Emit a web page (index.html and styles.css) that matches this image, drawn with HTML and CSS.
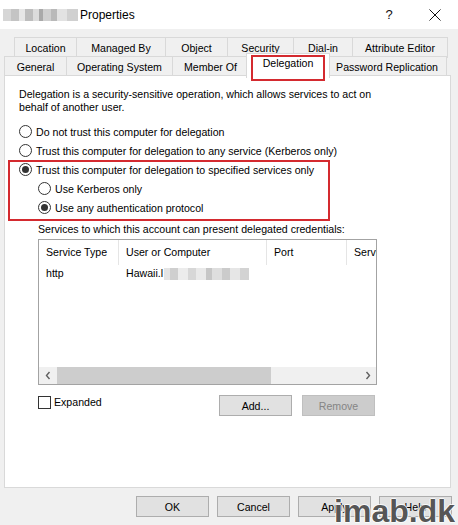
FILE: index.html
```html
<!DOCTYPE html>
<html lang="en">
<head>
<meta charset="utf-8">
<title>Properties</title>
<link rel="stylesheet" href="styles.css">
</head>
<body>
<div class="dialog">
  <header class="titlebar">
    <span class="obj-name"></span>
    <span class="title">Properties</span>
    <span class="caption">
      <span class="cap-btn help">?</span>
      <span class="cap-btn close">
        <svg width="12" height="12" viewBox="0 0 12 12"><path d="M0.5 0.5 L11.5 11.5 M11.5 0.5 L0.5 11.5" stroke="#111" stroke-width="1" fill="none"/></svg>
      </span>
    </span>
  </header>

  <nav class="tabstrip">
    <div class="tabrow row1">
      <div class="tab">Location</div>
      <div class="tab">Managed By</div>
      <div class="tab">Object</div>
      <div class="tab">Security</div>
      <div class="tab">Dial-in</div>
      <div class="tab last">Attribute Editor</div>
    </div>
    <div class="tabrow row2">
      <div class="tab">General</div>
      <div class="tab">Operating System</div>
      <div class="tab">Member Of</div>
      <div class="tab active">Delegation</div>
      <div class="tab last">Password Replication</div>
    </div>
  </nav>

  <section class="panel">
    <p class="desc">Delegation is a security-sensitive operation, which allows services to act on<br>behalf of another user.</p>

    <div class="options">
      <label class="opt"><span class="radio"></span>Do not trust this computer for delegation</label>
      <label class="opt"><span class="radio"></span>Trust this computer for delegation to any service (Kerberos only)</label>
      <label class="opt"><span class="radio on"></span>Trust this computer for delegation to specified services only</label>
      <label class="opt sub"><span class="radio"></span>Use Kerberos only</label>
      <label class="opt sub"><span class="radio on"></span>Use any authentication protocol</label>
    </div>
    <div class="highlight options-mark"></div>

    <p class="svc-label">Services to which this account can present delegated credentials:</p>

    <div class="listview">
      <div class="lv-head">
        <span>Service Type</span>
        <span>User or Computer</span>
        <span>Port</span>
        <span>Service Name</span>
      </div>
      <div class="lv-body">
        <div class="lv-row">
          <span>http</span>
          <span>Hawaii.l<i class="masked"></i></span>
          <span></span>
          <span></span>
        </div>
      </div>
      <div class="hscroll">
        <span class="arrow">
          <svg width="6" height="9" viewBox="0 0 6 9"><path d="M4.5 1 L1.5 4.5 L4.5 8" stroke="#606060" stroke-width="1.4" fill="none"/></svg>
        </span>
        <span class="track"><span class="thumb"></span></span>
        <span class="arrow">
          <svg width="6" height="9" viewBox="0 0 6 9"><path d="M1.5 1 L4.5 4.5 L1.5 8" stroke="#606060" stroke-width="1.4" fill="none"/></svg>
        </span>
      </div>
    </div>

    <div class="list-actions">
      <label class="check"><span class="box"></span>Expanded</label>
      <button class="btn add">Add...</button>
      <button class="btn remove" disabled>Remove</button>
    </div>
  </section>

  <footer class="buttons">
    <button class="btn">OK</button>
    <button class="btn">Cancel</button>
    <button class="btn">Apply</button>
    <button class="btn">Help</button>
  </footer>

  <div class="watermark">imab.dk</div>
</div>
</body>
</html>
```

FILE: styles.css
```css
* { box-sizing: border-box; }

html, body {
  margin: 0;
  padding: 0;
}

body {
  width: 458px;
  height: 525px;
  overflow: hidden;
  background: #f0f0f0;
  font-family: "Liberation Sans", Arial, sans-serif;
  font-size: 10.6px;
  color: #000;
}

.dialog {
  position: relative;
  width: 458px;
  height: 525px;
}

/* ---------- title bar ---------- */
.titlebar {
  height: 29px;
  background: #fff;
  display: flex;
  align-items: center;
  padding-left: 3px;
}

.obj-name {
  width: 75px;
  height: 12px;
  background:
    linear-gradient(90deg,
      #d6d6d6 0 8px, #c4c4c4 8px 16px, #e6e6e6 16px 22px,
      #bdbdbd 22px 30px, #dcdcdc 30px 36px, #a9a9a9 36px 40px,
      #cfcfcf 40px 48px, #b9b9b9 48px 54px, #e2e2e2 54px 64px,
      #d0d0d0 64px 75px);
}

.title {
  margin-left: 2px;
  font-size: 12px;
}

.caption {
  margin-left: auto;
  display: flex;
  height: 29px;
}

.cap-btn {
  width: 46px;
  height: 29px;
  display: flex;
  align-items: center;
  justify-content: center;
}

.help {
  font-size: 13px;
  color: #111;
}

/* ---------- tabs ---------- */
.tabstrip {
  margin-top: 8px;
}

.tabrow {
  display: grid;
  height: 19px;
}

.row1 {
  margin-left: 14px;
  grid-template-columns: 62px 89px 62px 66px 59px 96px;
}

.row2 {
  margin-left: 4px;
  grid-template-columns: 62px 106px 76px 80px 119px;
}

.tab {
  border-top: 1px solid #d9d9d9;
  border-left: 1px solid #d9d9d9;
  background: #f0f0f0;
  text-align: center;
  line-height: 19px;
  padding-top: 1px;
  white-space: nowrap;
}

.tab.last {
  border-right: 1px solid #d9d9d9;
}

.tab.active {
  position: relative;
  z-index: 1;
  margin: -3px -2px -1px -2px;
  padding-top: 0;
  background: #fff;
  border-right: 1px solid #d9d9d9;
  line-height: 18px;
}

.row2 .tab.active + .tab {
  border-left: none;
}

/* annotation frame round the selected tab */
.tab.active::after {
  content: "";
  position: absolute;
  left: 4px;
  right: 4px;
  top: 1px;
  bottom: -3px;
  border: 2px solid #d42a2f;
}

/* ---------- page panel ---------- */
.panel {
  position: relative;
  height: 413px;
  margin: 0 7px 0 4px;
  border: 1px solid #d9d9d9;
  background: #fff;
  padding: 12px 14px 0 14px;
}

.desc {
  margin: 0;
  line-height: 13px;
}

.options {
  margin-top: 8px;
}

.opt {
  display: flex;
  align-items: center;
  height: 19px;
  gap: 4px;
  white-space: nowrap;
}

.opt.sub {
  padding-left: 19px;
}

.radio {
  flex: none;
  width: 13px;
  height: 13px;
  border: 1px solid #333;
  border-radius: 50%;
  background: #fff;
  display: flex;
  align-items: center;
  justify-content: center;
}

.radio.on::after {
  content: "";
  width: 7px;
  height: 7px;
  border-radius: 50%;
  background: #333;
}

/* annotation frame round the chosen option */
.highlight {
  position: absolute;
  border: 2px solid #d42a2f;
}

.options-mark {
  left: 3px;
  top: 84px;
  width: 322px;
  height: 61px;
}

.svc-label {
  margin: 6px 0 0 19px;
  line-height: 13px;
}

/* ---------- list view ---------- */
.listview {
  margin: 3px 0 0 19px;
  width: 339px;
  height: 146px;
  border: 1px solid #a3a3a3;
  background: #fff;
  display: flex;
  flex-direction: column;
  overflow: hidden;
}

.lv-head,
.lv-row {
  display: grid;
  grid-template-columns: 80px 148px 80px 200px;
  white-space: nowrap;
}

.lv-head {
  height: 25px;
  flex: none;
}

.lv-head span {
  padding-left: 7px;
  line-height: 25px;
  border-right: 1px solid #e5e5e5;
  overflow: hidden;
}

.lv-body {
  flex: 1;
}

.lv-row {
  height: 17px;
}

.lv-row span {
  padding-left: 7px;
  line-height: 17px;
  display: flex;
  align-items: center;
}

.masked {
  display: inline-block;
  width: 85px;
  height: 12px;
  margin-left: 1px;
  background:
    linear-gradient(90deg,
      #e4e4e4 0 6px, #cfcfcf 6px 14px, #ececec 14px 24px,
      #d7d7d7 24px 32px, #e9e9e9 32px 42px, #c6c6c6 42px 48px,
      #dedede 48px 58px, #cbcbcb 58px 66px, #e6e6e6 66px 76px,
      #d3d3d3 76px 85px);
}

.hscroll {
  flex: none;
  height: 17px;
  display: flex;
  background: #f0f0f0;
}

.arrow {
  width: 17px;
  display: flex;
  align-items: center;
  justify-content: center;
}

.track {
  flex: 1;
  display: flex;
}

.thumb {
  width: 214px;
  margin-left: 1px;
  background: #cdcdcd;
}

/* ---------- list actions ---------- */
.list-actions {
  margin: 10px 0 0 19px;
  width: 337px;
  display: flex;
  align-items: flex-start;
}

.check {
  display: flex;
  align-items: center;
  gap: 3px;
  margin-top: 1px;
  line-height: 13px;
}

.box {
  width: 13px;
  height: 13px;
  border: 1px solid #333;
  background: #fff;
}

.btn {
  width: 73px;
  height: 21px;
  padding: 0;
  border: 1px solid #adadad;
  background: #e1e1e1;
  font-family: inherit;
  font-size: inherit;
  color: #000;
}

.btn.add {
  margin-left: auto;
}

.btn.remove {
  margin-left: 10px;
  background: #cccccc;
  border-color: #bfbfbf;
  color: #858585;
}

/* ---------- dialog buttons ---------- */
.buttons {
  margin-top: 8px;
  padding-right: 6px;
  display: flex;
  justify-content: flex-end;
  gap: 8px;
}

/* site stamp in the corner */
.watermark {
  position: absolute;
  right: 3px;
  bottom: -2px;
  font-size: 32px;
  line-height: 32px;
  font-weight: bold;
  color: rgba(40, 40, 40, 0.8);
  text-shadow:
    1px 0 0 rgba(255, 255, 255, 0.8), -1px 0 0 rgba(255, 255, 255, 0.8),
    0 1px 0 rgba(255, 255, 255, 0.8), 0 -1px 0 rgba(255, 255, 255, 0.8);
}
```
